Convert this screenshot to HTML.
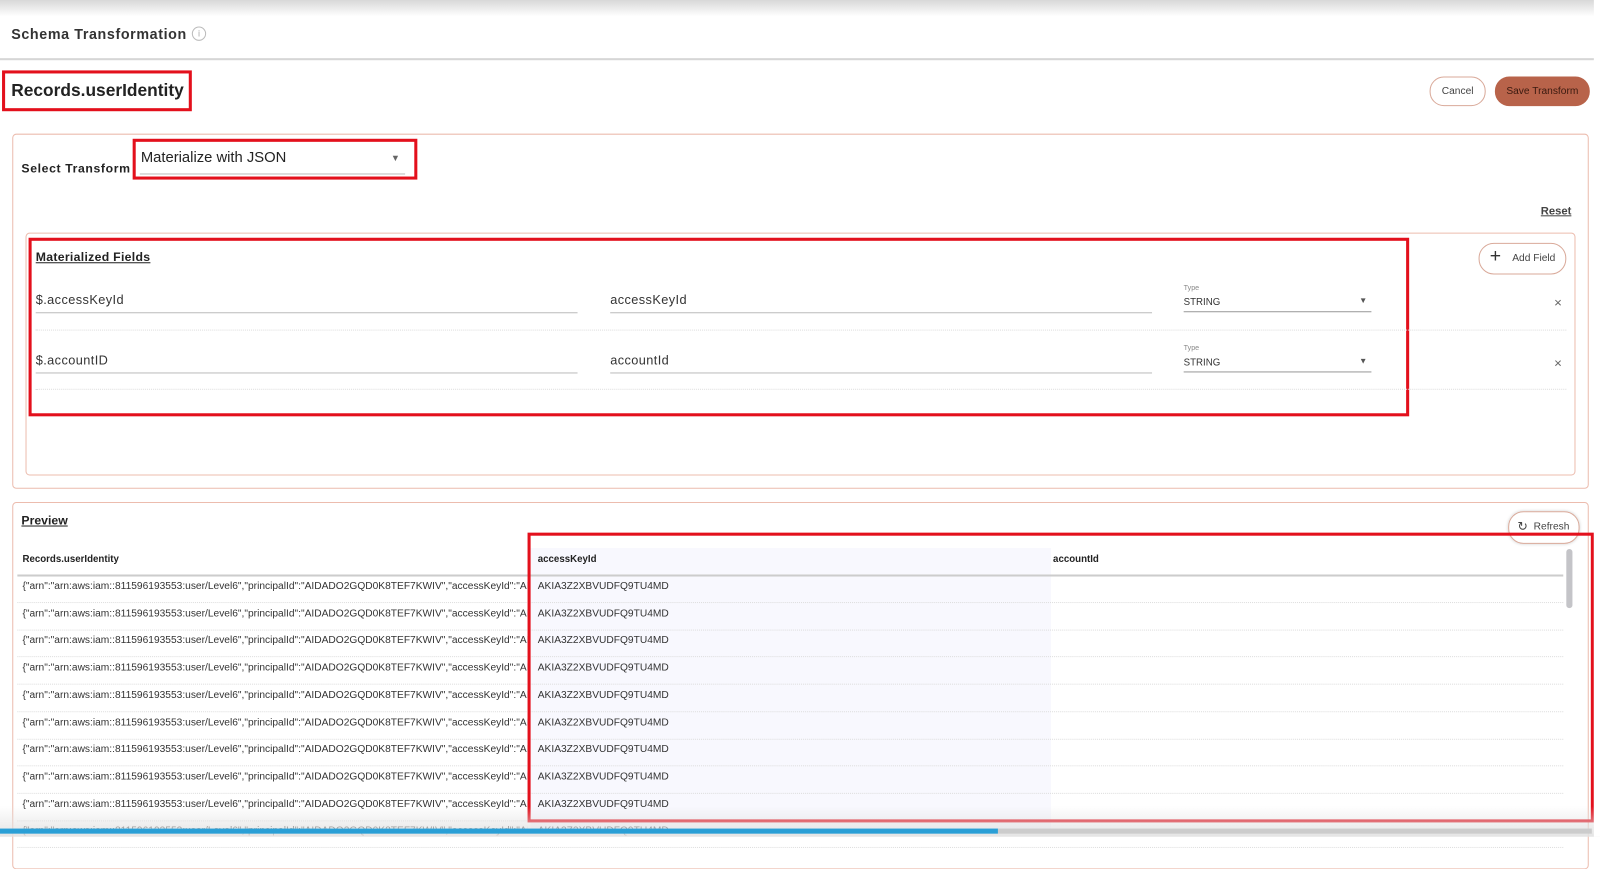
<!DOCTYPE html>
<html><head><meta charset="utf-8"><style>
*{box-sizing:border-box;margin:0;padding:0}
body{width:1600px;height:836px;position:relative;overflow:hidden;background:#fff;font-family:"Liberation Sans",sans-serif;color:#222}
#w{position:absolute;left:0;top:0;width:1568px;height:820px;transform:scale(1.0204);transform-origin:0 0}
.a{position:absolute}
.red{position:absolute;border:3px solid #e3101c}
.b{font-weight:bold}
.t{position:absolute;white-space:nowrap}
.ul{position:absolute;height:1px;background:#bbb}
.dot{position:absolute;height:0;border-top:1px dotted #ddd}
.row{position:absolute;left:22px;font-size:10px;color:#333;white-space:nowrap}
</style></head><body><div id="w">
<div class="a" style="left:0;top:0;width:1568px;height:16px;background:linear-gradient(#d8d8d8,#fff)"></div>
<div class="t b" style="left:11px;top:25px;font-size:14px;color:#333;letter-spacing:0.6px">Schema Transformation</div>
<div class="a" style="left:188px;top:26px;width:14px;height:14px;border:1px solid #bbb;border-radius:50%;font-size:9px;color:#aaa;text-align:center;line-height:12px">i</div>
<div class="a" style="left:0;top:57px;width:1568px;height:2px;background:#d6d6d6"></div>
<div class="red" style="left:2px;top:69px;width:186px;height:40px"></div>
<div class="t b" style="left:11px;top:79px;font-size:17px;color:#222">Records.userIdentity</div>
<div class="a" style="left:1401px;top:75px;width:55px;height:29px;border:1px solid #d9a999;border-radius:14px;font-size:10px;color:#444;text-align:center;line-height:27px">Cancel</div>
<div class="a" style="left:1465px;top:75px;width:93px;height:29px;background:#b8634a;border-radius:14px;font-size:10px;color:#3a1a10;text-align:center;line-height:29px">Save Transform</div>

<div class="a" style="left:12px;top:131px;width:1545px;height:348px;border:1px solid #ecbcae;border-radius:4px"></div>
<div class="t b" style="left:21px;top:158px;font-size:12px;color:#222;letter-spacing:0.6px">Select Transform</div>
<div class="red" style="left:130px;top:136px;width:279px;height:40px"></div>
<div class="t" style="left:138px;top:147px;font-size:14.5px;color:#222">Materialize with JSON</div>
<div class="ul" style="left:137px;top:170px;width:260px"></div>
<div class="t" style="left:383px;top:150px;font-size:9px;color:#666">▼</div>
<div class="t b" style="left:1510px;top:201px;font-size:11px;text-decoration:underline;color:#444">Reset</div>

<div class="a" style="left:25px;top:228px;width:1519px;height:238px;border:1px solid #ecbcae;border-radius:4px"></div>
<div class="red" style="left:28px;top:233px;width:1353px;height:175px"></div>
<div class="t b" style="left:35px;top:245px;font-size:12px;text-decoration:underline;color:#222;letter-spacing:0.3px">Materialized Fields</div>
<div class="a" style="left:1449px;top:238px;width:86px;height:31px;border:1px solid #d9a999;border-radius:15px;font-size:10px;color:#444;line-height:29px;padding-left:32px">Add Field</div>
<div class="t" style="left:1460px;top:241px;font-size:19px;color:#333">+</div>

<div class="t" style="left:35px;top:287px;font-size:12.5px;color:#333;letter-spacing:0.4px">$.accessKeyId</div>
<div class="ul" style="left:35px;top:306px;width:531px"></div>
<div class="t" style="left:598px;top:287px;font-size:12.5px;color:#333;letter-spacing:0.4px">accessKeyId</div>
<div class="ul" style="left:598px;top:306px;width:531px"></div>
<div class="t" style="left:1160px;top:279px;font-size:7px;color:#888">Type</div>
<div class="t" style="left:1160px;top:291px;font-size:9.5px;color:#333">STRING</div>
<div class="ul" style="left:1160px;top:305px;width:184px;background:#999"></div>
<div class="t" style="left:1332px;top:290px;font-size:8px;color:#555">▼</div>
<div class="t" style="left:1523px;top:289px;font-size:13px;color:#666">×</div>
<div class="dot" style="left:35px;top:323px;width:1500px"></div>

<div class="t" style="left:35px;top:346px;font-size:12.5px;color:#333;letter-spacing:0.4px">$.accountID</div>
<div class="ul" style="left:35px;top:365px;width:531px"></div>
<div class="t" style="left:598px;top:346px;font-size:12.5px;color:#333;letter-spacing:0.4px">accountId</div>
<div class="ul" style="left:598px;top:365px;width:531px"></div>
<div class="t" style="left:1160px;top:338px;font-size:7px;color:#888">Type</div>
<div class="t" style="left:1160px;top:350px;font-size:9.5px;color:#333">STRING</div>
<div class="ul" style="left:1160px;top:364px;width:184px;background:#999"></div>
<div class="t" style="left:1332px;top:349px;font-size:8px;color:#555">▼</div>
<div class="t" style="left:1523px;top:348px;font-size:13px;color:#666">×</div>
<div class="dot" style="left:35px;top:381px;width:1500px"></div>

<div class="a" style="left:12px;top:492px;width:1545px;height:360px;border:1px solid #ecbcae;border-radius:4px"></div>
<div class="t b" style="left:21px;top:503px;font-size:12px;text-decoration:underline;color:#222">Preview</div>
<div class="a" style="left:1478px;top:501px;width:70px;height:32px;border:1px solid #d9a999;border-radius:15px;box-shadow:0 0 3px #ccc;font-size:10px;color:#444;line-height:30px;padding-left:24px">Refresh</div>
<div class="t" style="left:1487px;top:509px;font-size:12px;color:#444">↻</div>

<div class="a" style="left:520px;top:537px;width:510px;height:280px;background:#f8f8fe"></div>
<div class="t b" style="left:22px;top:543px;font-size:9.5px">Records.userIdentity</div>
<div class="t b" style="left:527px;top:543px;font-size:9.5px">accessKeyId</div>
<div class="t b" style="left:1032px;top:543px;font-size:9.5px">accountId</div>
<div class="a" style="left:17px;top:563px;width:1515px;height:2px;background:#ccc"></div>
<div class="a" style="left:1535px;top:538px;width:6px;height:58px;background:#c4c4c8;border-radius:3px"></div>

<div id="rows"></div>
<script>
var h='';
for(var i=0;i<10;i++){var y=569+i*26.7;
h+='<div class="row" style="top:'+y+'px;width:495px;overflow:hidden">{"arn":"arn:aws:iam::811596193553:user/Level6","principalId":"AIDADO2GQD0K8TEF7KWIV","accessKeyId":"AKI…</div>';
h+='<div class="row" style="left:527px;top:'+y+'px">AKIA3Z2XBVUDFQ9TU4MD</div>';
h+='<div class="dot" style="left:17px;top:'+(y+21)+'px;width:1515px"></div>';}
document.getElementById('rows').innerHTML=h;
</script>
<div class="red" style="left:517px;top:522px;width:1045px;height:284px"></div>
<div class="a" style="left:0;top:790px;width:1568px;height:30px;background:linear-gradient(rgba(255,255,255,0),rgba(225,225,225,.9))"></div>
<div class="a" style="left:0;top:812px;width:978px;height:5px;background:#2a9fd6"></div>
<div class="a" style="left:978px;top:812px;width:582px;height:5px;background:#ccc"></div>
<div class="a" style="left:1562px;top:0;width:10px;height:820px;background:#fff"></div>
</div></body></html>
